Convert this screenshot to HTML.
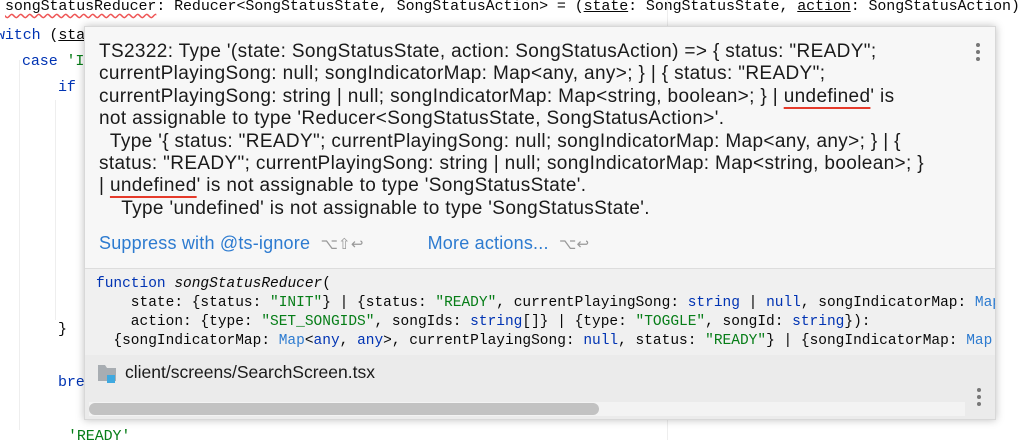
<!DOCTYPE html>
<html><head><style>
body{margin:0;width:1024px;height:440px;background:#fff;position:relative;overflow:hidden;font-family:"Liberation Sans",sans-serif}
.ed{position:absolute;font-family:"Liberation Mono",monospace;font-size:15px;letter-spacing:-0.1px;color:#080808;white-space:pre}
.kw{color:#0033b3}
.pop{position:absolute;left:84px;top:26px;width:912px;height:394px;background:#f7f7f7;box-shadow:0 0 8px rgba(0,0,0,.25);border:1px solid #d8d8d8;box-sizing:border-box;overflow:hidden}
.msg{position:absolute;left:14px;top:14px;font-size:19px;letter-spacing:0.36px;line-height:22.4px;color:#1a1a1a;white-space:pre}
.u{text-decoration:underline;text-decoration-color:#e53a2a;text-decoration-thickness:2px;text-underline-offset:5px}
.act{position:absolute;left:14px;top:206px;font-size:18px;letter-spacing:0.2px;color:#2d7bd0;white-space:pre}
.act span{color:#999;font-size:15px}
.code{position:absolute;left:0;top:241px;width:912px;height:86px;background:#f0f0f0;border-top:1px solid #ddd;border-bottom:1px solid #ddd}
.code pre{margin:0;position:absolute;left:11px;top:6px;font-family:"Liberation Mono",monospace;font-size:14.5px;line-height:19px;color:#080808}
.s{color:#067d17}.b{color:#0033b3}.t{color:#2d7bd0}
.foot{position:absolute;left:0;top:328px;width:912px;height:66px;background:#ebebeb}
.dots{position:absolute;width:4px}
.dots i{display:block;width:4px;height:4px;border-radius:2px;background:#777;margin-bottom:3px}
</style></head><body>
<div class="ed" style="left:5px;top:-2px"><span style="text-decoration:underline wavy #e55;text-underline-offset:3px">songStatusReducer</span>: Reducer&lt;SongStatusState, SongStatusAction&gt; = (<u>state</u>: SongStatusState, <u>action</u>: SongStatusAction)</div>
<div class="ed" style="left:-4px;top:27px"><span class="kw">witch</span> (<u>sta</u></div>
<div class="ed" style="left:22px;top:53px"><span class="kw">case</span> <span class="s">'I</span></div>
<div class="ed" style="left:58px;top:79px"><span class="kw">if</span></div>
<div class="ed" style="left:58px;top:321px">}</div>
<div class="ed" style="left:58px;top:374px"><span class="kw">bre</span></div>
<div class="ed" style="left:68px;top:428px"><span class="s">'READY'</span></div>
<div style="position:absolute;left:19px;top:60px;width:1px;height:370px;background:#eee"></div>
<div style="position:absolute;left:55px;top:100px;width:1px;height:220px;background:#eee"></div>
<div style="position:absolute;left:667px;top:0;width:1px;height:440px;background:#eee"></div>
<div class="pop">
<div class="msg">TS2322: Type '(state: SongStatusState, action: SongStatusAction) =&gt; { status: "READY";
currentPlayingSong: null; songIndicatorMap: Map&lt;any, any&gt;; } | { status: "READY";
currentPlayingSong: string | null; songIndicatorMap: Map&lt;string, boolean&gt;; } | <span class="u">undefined</span>' is
not assignable to type 'Reducer&lt;SongStatusState, SongStatusAction&gt;'.
  Type '{ status: "READY"; currentPlayingSong: null; songIndicatorMap: Map&lt;any, any&gt;; } | {
status: "READY"; currentPlayingSong: string | null; songIndicatorMap: Map&lt;string, boolean&gt;; }
| <span class="u">undefined</span>' is not assignable to type 'SongStatusState'.
    Type 'undefined' is not assignable to type 'SongStatusState'.</div>
<div class="act">Suppress with @ts-ignore  <span>⌥⇧↩</span><span style="display:inline-block;width:64px"></span>More actions...  <span>⌥↩</span></div>
<div class="dots" style="left:891px;top:16px"><i></i><i></i><i></i></div>
<div class="code"><pre><span class="b">function</span> <i>songStatusReducer</i>(
    state: {status: <span class="s">"INIT"</span>} | {status: <span class="s">"READY"</span>, currentPlayingSong: <span class="b">string</span> | <span class="b">null</span>, songIndicatorMap: <span class="t">Map</span>
    action: {type: <span class="s">"SET_SONGIDS"</span>, songIds: <span class="b">string</span>[]} | {type: <span class="s">"TOGGLE"</span>, songId: <span class="b">string</span>}):
  {songIndicatorMap: <span class="t">Map</span>&lt;<span class="b">any</span>, <span class="b">any</span>&gt;, currentPlayingSong: <span class="b">null</span>, status: <span class="s">"READY"</span>} | {songIndicatorMap: <span class="t">Map</span></pre></div>
<div class="foot">
<svg style="position:absolute;left:12px;top:8px" width="22" height="22"><path d="M1 2h7l2 3h9v13H1z" fill="#a8adb2"/><rect x="10" y="12" width="8" height="8" fill="#3fa9e0"/></svg>
<div style="position:absolute;left:40px;top:7px;font-size:17.5px;color:#1a1a1a">client/screens/SearchScreen.tsx</div>
<div style="position:absolute;left:4px;top:47px;width:876px;height:14px;background:#f3f3f3"></div>
<div style="position:absolute;left:4px;top:48px;width:510px;height:12px;border-radius:6px;background:#c2c2c2"></div>
</div>
</div>
<div class="dots" style="left:977px;top:388px"><i></i><i></i><i></i></div>
</body></html>
